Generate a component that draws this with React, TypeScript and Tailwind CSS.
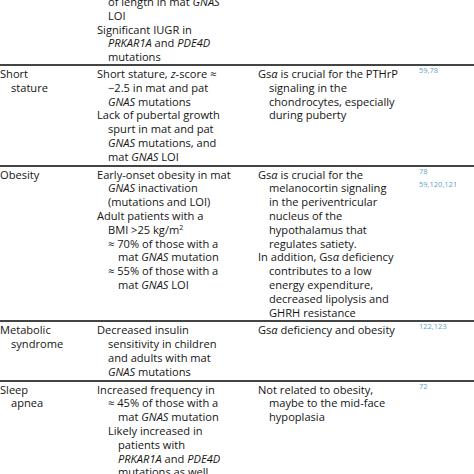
import type { ReactNode } from "react";

// hanging-indent paragraph, continuation lines pushed in by 11px
function Item({ children, sub = false }: { children: ReactNode; sub?: boolean }) {
  return (
    <div className={sub ? "whitespace-nowrap pl-[10px] indent-[-10px]" : "whitespace-nowrap pl-[11px] indent-[-11px]"}>
      {children}
    </div>
  );
}

function Refs({ lines }: { lines: string[] }) {
  return (
    <div className="-mt-[4px] text-[7.5px] font-normal text-[#5f9fc6]">
      {lines.map((l, i) => (
        <div key={i} className="h-[13.8px] pt-[3px] leading-[8px]">
          {l}
        </div>
      ))}
    </div>
  );
}

function Row({
  label,
  effect,
  mechanism,
  refs,
  first = false,
}: {
  label?: ReactNode;
  effect: ReactNode;
  mechanism?: ReactNode;
  refs?: string[];
  first?: boolean;
}) {
  return (
    <div
      className={
        first
          ? "-mt-[6px] grid grid-cols-[97px_161px_161px_1fr] pt-[1px]"
          : "grid grid-cols-[97px_161px_161px_1fr] border-t-2 border-[#444] pt-[1px] pb-[1px]"
      }
    >
      <div>{label}</div>
      <div>{effect}</div>
      <div>{mechanism}</div>
      <div>{refs ? <Refs lines={refs} /> : null}</div>
    </div>
  );
}

export default function App() {
  return (
    <div
      className="h-[474px] w-[474px] overflow-hidden bg-white text-[11.1px] font-medium leading-[13.8px] text-[#141414]"
      style={{ fontFamily: '"Open Sans", "Noto Sans", sans-serif' }}
    >
      <Row
        first
        effect={
          <>
            <Item>
              <span className="pl-[11px]">of length in mat <i>GNAS</i></span>
              <br />
              LOI
            </Item>
            <Item>
              Significant IUGR in
              <br />
              <i>PRKAR1A</i> and <i>PDE4D</i>
              <br />
              mutations
            </Item>
          </>
        }
      />
      <Row
        label={
          <Item>
            Short
            <br />
            stature
          </Item>
        }
        effect={
          <>
            <Item>
              Short stature, <i>z</i>-score ≈
              <br />
              −2.5 in mat and pat
              <br />
              <i>GNAS</i> mutations
            </Item>
            <Item>
              Lack of pubertal growth
              <br />
              spurt in mat and pat
              <br />
              <i>GNAS</i> mutations, and
              <br />
              mat <i>GNAS</i> LOI
            </Item>
          </>
        }
        mechanism={
          <Item>
            Gs<i>α</i> is crucial for the PTHrP
            <br />
            signaling in the
            <br />
            chondrocytes, especially
            <br />
            during puberty
          </Item>
        }
        refs={["59,78"]}
      />
      <Row
        label={<Item>Obesity</Item>}
        effect={
          <>
            <Item>
              Early-onset obesity in mat
              <br />
              <i>GNAS</i> inactivation
              <br />
              (mutations and LOI)
            </Item>
            <Item>
              Adult patients with a
              <br />
              BMI &gt;25 kg/m
              <span className="relative -top-[4px] text-[7px] leading-none">2</span>
              <Item sub>
                ≈ 70% of those with a
                <br />
                mat <i>GNAS</i> mutation
              </Item>
              <Item sub>
                ≈ 55% of those with a
                <br />
                mat <i>GNAS</i> LOI
              </Item>
            </Item>
          </>
        }
        mechanism={
          <>
            <Item>
              Gs<i>α</i> is crucial for the
              <br />
              melanocortin signaling
              <br />
              in the periventricular
              <br />
              nucleus of the
              <br />
              hypothalamus that
              <br />
              regulates satiety.
            </Item>
            <Item>
              In addition, Gs<i>α</i> deficiency
              <br />
              contributes to a low
              <br />
              energy expenditure,
              <br />
              decreased lipolysis and
              <br />
              GHRH resistance
            </Item>
          </>
        }
        refs={["78", "59,120,121"]}
      />
      <Row
        label={
          <Item>
            Metabolic
            <br />
            syndrome
          </Item>
        }
        effect={
          <Item>
            Decreased insulin
            <br />
            sensitivity in children
            <br />
            and adults with mat
            <br />
            <i>GNAS</i> mutations
          </Item>
        }
        mechanism={<Item>Gs<i>α</i> deficiency and obesity</Item>}
        refs={["122,123"]}
      />
      <Row
        label={
          <Item>
            Sleep
            <br />
            apnea
          </Item>
        }
        effect={
          <Item>
            Increased frequency in
            <Item sub>
              ≈ 45% of those with a
              <br />
              mat <i>GNAS</i> mutation
            </Item>
            <Item sub>
              Likely increased in
              <br />
              patients with
              <br />
              <i>PRKAR1A</i> and <i>PDE4D</i>
              <br />
              mutations as well
            </Item>
          </Item>
        }
        mechanism={
          <Item>
            Not related to obesity,
            <br />
            maybe to the mid-face
            <br />
            hypoplasia
          </Item>
        }
        refs={["72"]}
      />
    </div>
  );
}
